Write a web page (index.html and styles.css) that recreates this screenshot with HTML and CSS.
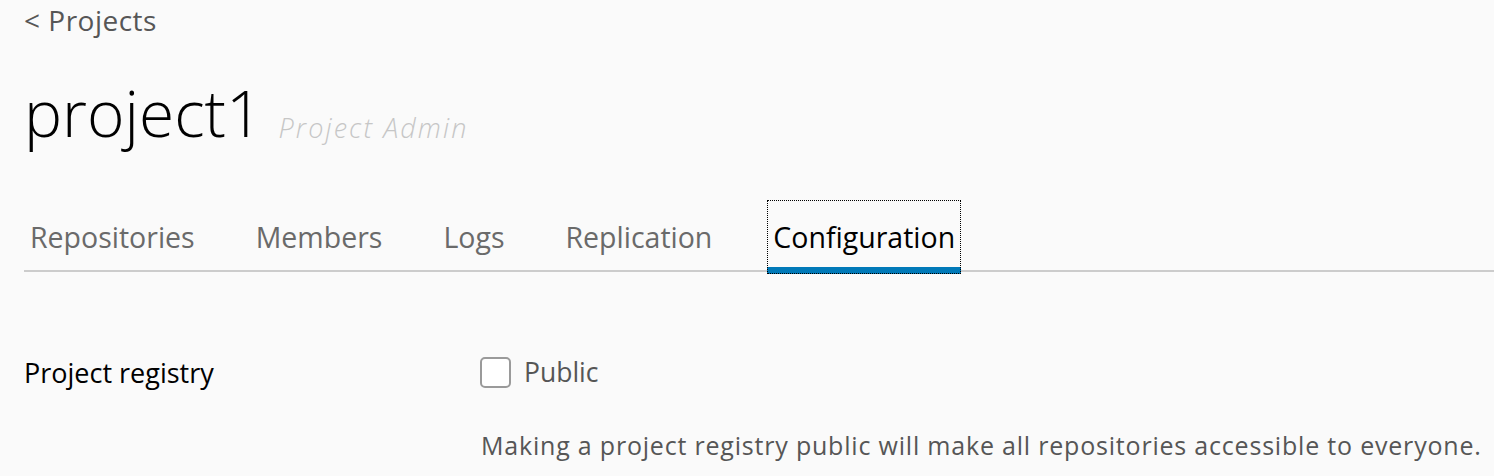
FILE: index.html
```html
<!DOCTYPE html>
<html lang="en">
<head>
<meta charset="utf-8">
<title>project1</title>
<link rel="stylesheet" href="styles.css">
</head>
<body>
<div class="page">
  <a class="back" href="#">&lt; Projects</a>
  <div class="title-row">
    <h1 class="title">project1</h1>
    <span class="role">Project Admin</span>
  </div>
  <nav class="tabs">
    <a class="tab" href="#">Repositories</a>
    <a class="tab" href="#">Members</a>
    <a class="tab" href="#">Logs</a>
    <a class="tab" href="#">Replication</a>
    <a class="tab active" href="#">Configuration</a>
  </nav>
  <div class="config">
    <div class="row">
      <div class="label">Project registry</div>
      <label class="check">
        <span class="box"></span>
        <span class="check-text">Public</span>
      </label>
    </div>
    <p class="hint">Making a project registry public will make all repositories accessible to everyone.</p>
  </div>
</div>
</body>
</html>
```

FILE: styles.css
```css
html, body {
  margin: 0;
  padding: 0;
  background: #fafafa;
}
body {
  font-family: "Open Sans", "Liberation Sans", sans-serif;
  color: #565656;
  overflow: hidden;
}
.page {
  padding: 0 0 0 24px;
}
.back {
  display: block;
  height: 44px;
  line-height: 40px;
  font-size: 28px;
  letter-spacing: 0.5px;
  color: #565656;
  text-decoration: none;
}
.title-row {
  display: flex;
  align-items: baseline;
  height: 156px;
  padding-top: 37px;
  box-sizing: border-box;
}
.title {
  margin: 0;
  font-size: 64px;
  font-weight: 300;
  color: #000;
  line-height: 64px;
}
.role {
  margin-left: 16px;
  font-size: 27px;
  letter-spacing: 2.1px;
  font-style: italic;
  font-weight: 300;
  color: #c6c6c6;
  position: relative;
  top: 1px;
}
.tabs {
  display: flex;
  gap: 49px;
  height: 70px;
  border-bottom: 2px solid #cccccc;
}
.tab {
  display: flex;
  align-items: center;
  height: 74px;
  padding: 0 6px;
  box-sizing: border-box;
  font-size: 28.5px;
  color: #6a6a6a;
  text-decoration: none;
}
.tab.active {
  color: #000;
  box-shadow: inset 0 -7px 0 #0079b8;
  outline: 1px dotted #000;
  outline-offset: -1px;
}
.config {
  padding-top: 84px;
}
.row {
  display: flex;
  align-items: center;
  height: 32px;
}
.label {
  width: 456px;
  font-size: 27px;
  color: #000;
}
.check {
  display: flex;
  align-items: center;
  gap: 13px;
}
.box {
  width: 31px;
  height: 31px;
  box-sizing: border-box;
  border: 2px solid #9a9a9a;
  border-radius: 5px;
  background: #fff;
}
.check-text {
  font-size: 26.5px;
  color: #565656;
}
.hint {
  margin: 40px 0 0 457px;
  font-size: 25px;
  letter-spacing: 0.8px;
  color: #565656;
}
```
